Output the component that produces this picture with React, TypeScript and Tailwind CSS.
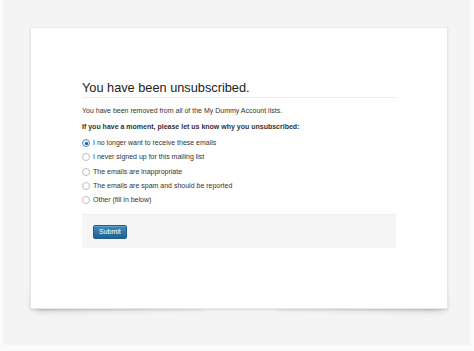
import React, { useState } from 'react';

const REASONS = [
  'I no longer want to receive these emails',
  'I never signed up for this mailing list',
  'The emails are inappropriate',
  'The emails are spam and should be reported',
  'Other (fill in below)'
];

export default function App() {
  const [picked, setPicked] = useState(0);

  return (
    <div className="w-[474px] h-[351px] bg-[#fbfbfb] pl-[3px] pr-[4px] pb-[6px] font-['Liberation_Sans',Arial,sans-serif]">
      <div className="h-full bg-[#f4f4f4] pt-[27px] pl-[27px] pr-[22px]">
        <div className="relative">
          {/* curled shadow under the corners */}
          <div className="absolute left-[5px] bottom-[1px] w-[40%] h-[10px] bg-black/45 blur-[4px] -rotate-[1.2deg] origin-left"></div>
          <div className="absolute right-[5px] bottom-[1px] w-[40%] h-[10px] bg-black/45 blur-[4px] rotate-[1.2deg] origin-right"></div>
          <div className="relative h-[282px] bg-white border border-[#e8e8e8] shadow-[0_1px_2px_rgba(0,0,0,0.1)] pt-[52px] px-[51px]">
            <h1 className="text-[12.75px] leading-[15px] text-[#222] pb-[2px] border-b border-[#ececec]">
              You have been unsubscribed.
            </h1>
            <p className="mt-[8px] text-[7px] leading-[10px] text-[#333]">
              You have been removed from all of the My Dummy Account lists.
            </p>
            <p className="mt-[6px] text-[7px] leading-[10px] font-bold text-[#333]">
              If you have a moment, please let us know why you unsubscribed:
            </p>
            <div className="mt-[6px] flex flex-col gap-[4.25px]">
              {REASONS.map((r, i) => (
                <label key={r} className="flex items-center gap-[3px] text-[7px] leading-[10px] text-[#333] cursor-pointer" onClick={() => setPicked(i)}>
                  <span className={`w-[8px] h-[8px] rounded-full border flex items-center justify-center ${picked === i ? 'border-[#5a8ec8] bg-[#dbe9f8]' : 'border-[#bdbdbd] bg-white'}`}>
                    {picked === i && <span className="w-[3px] h-[3px] rounded-full bg-[#1f4f86]"></span>}
                  </span>
                  {r}
                </label>
              ))}
            </div>
            <div className="mt-[9px] h-[34px] bg-[#f5f5f5] border-t border-[#eeeeee] px-[11px] flex items-center">
              <button className="h-[14px] px-[5px] rounded-[2px] border border-[#1f5e86] bg-gradient-to-b from-[#3a8cbf] to-[#1f628f] text-white text-[7px] leading-none shadow-[inset_0_1px_0_rgba(255,255,255,0.2)]">
                Submit
              </button>
            </div>
          </div>
        </div>
      </div>
    </div>
  );
}
